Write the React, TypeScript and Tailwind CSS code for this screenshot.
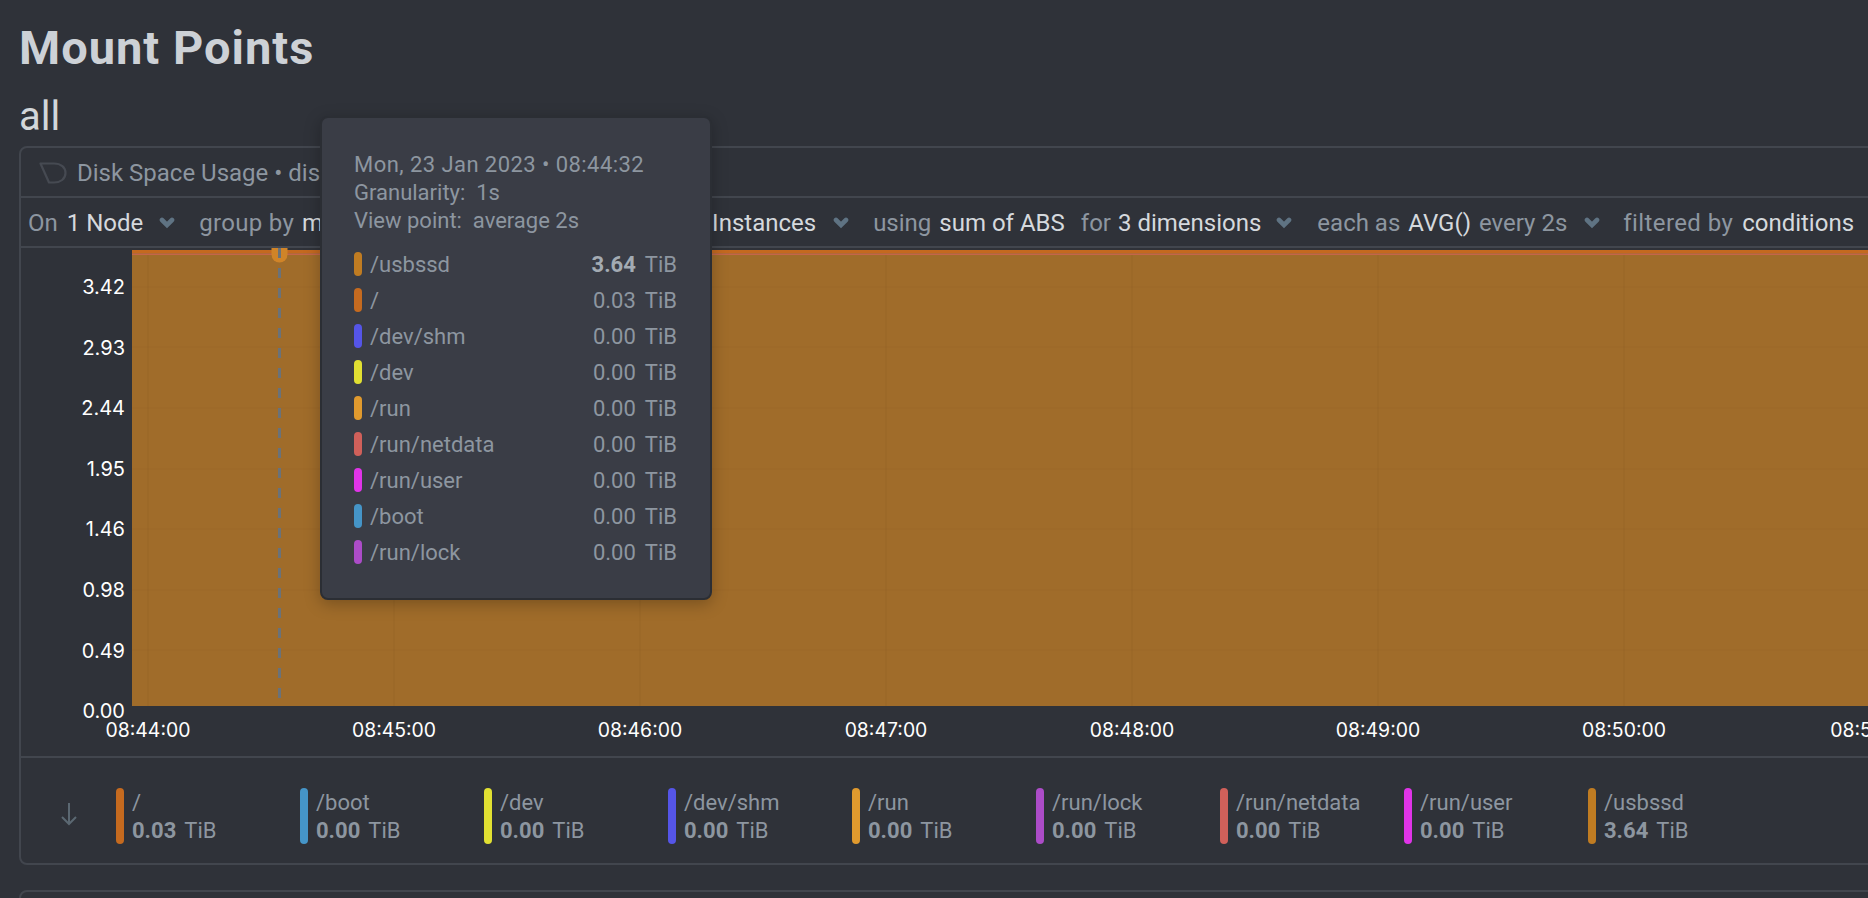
const tooltipRows = [
  { name: "/usbssd", value: "3.64", color: "bg-[#c07c22]", strong: true },
  { name: "/", value: "0.03", color: "bg-[#c56a1f]" },
  { name: "/dev/shm", value: "0.00", color: "bg-[#5555e8]" },
  { name: "/dev", value: "0.00", color: "bg-[#e1e032]" },
  { name: "/run", value: "0.00", color: "bg-[#e09a2e]" },
  { name: "/run/netdata", value: "0.00", color: "bg-[#d0605a]" },
  { name: "/run/user", value: "0.00", color: "bg-[#e034e8]" },
  { name: "/boot", value: "0.00", color: "bg-[#4595c8]" },
  { name: "/run/lock", value: "0.00", color: "bg-[#ac4cc8]" },
];

const legend = [
  { name: "/", value: "0.03", color: "bg-[#c56a1f]" },
  { name: "/boot", value: "0.00", color: "bg-[#4595c8]" },
  { name: "/dev", value: "0.00", color: "bg-[#e1e032]" },
  { name: "/dev/shm", value: "0.00", color: "bg-[#5555e8]" },
  { name: "/run", value: "0.00", color: "bg-[#e09a2e]" },
  { name: "/run/lock", value: "0.00", color: "bg-[#ac4cc8]" },
  { name: "/run/netdata", value: "0.00", color: "bg-[#d0605a]" },
  { name: "/run/user", value: "0.00", color: "bg-[#e034e8]" },
  { name: "/usbssd", value: "3.64", color: "bg-[#c07c22]" },
];

const yLabels = ["3.42", "2.93", "2.44", "1.95", "1.46", "0.98", "0.49", "0.00"];
const xLabels = ["08:44:00", "08:45:00", "08:46:00", "08:47:00", "08:48:00", "08:49:00", "08:50:00", "08:51:00"];

function Chevron() {
  return (
    <svg width="16" height="12" viewBox="0 0 16 12" fill="none" className="shrink-0">
      <path d="M3 3 L8 8 L13 3" stroke="#5f7383" strokeWidth="4.6" strokeLinecap="round" strokeLinejoin="miter" />
    </svg>
  );
}

function Gray({ children }: { children: React.ReactNode }) {
  return <span className="text-[#8d96a0]">{children}</span>;
}

function Light({ children }: { children: React.ReactNode }) {
  return <span className="text-[#d5d9dd]">{children}</span>;
}

export default function App() {
  return (
    <div className="relative h-[898px] w-[1868px] overflow-hidden bg-[#2f3239] font-['Roboto','Noto_Sans',sans-serif]">
      <div className="pl-[19px]">
        <h1 className="h-[95px] pt-[20px] text-[47px] leading-[56px] font-bold tracking-[1px] text-[#cdd1d6]">Mount Points</h1>
        <div className="h-[51px] text-[40px] leading-[44px] text-[#d2d6da]">all</div>

        <div className="w-[1900px] rounded-lg border-2 border-[#42464e]">
          <div className="flex h-[50px] items-center gap-[10px] border-b-2 border-[#42464e] pt-px pl-[18px] text-[24px] text-[#8d96a0]">
            <svg width="28" height="24" viewBox="0 0 28 24" fill="none" stroke="#464a52" strokeWidth="2.2">
              <path d="M1.5 2.5 H15 C22 2.5 26.5 6.5 26.5 12 C26.5 18 21.5 21.5 15 21.5 H10 Z" strokeLinejoin="round" />
            </svg>
            <span>Disk Space Usage • disk.space</span>
          </div>

          <div className="flex h-[50px] items-center border-b-2 border-[#42464e] pt-px pl-[7px] text-[24px] whitespace-nowrap">
            <Gray>On</Gray>
            <span className="ml-[9px]"><Light>1 Node</Light></span>
            <span className="ml-[16px]"><Chevron /></span>
            <span className="ml-[24px] tracking-[0.3px]"><Gray>group by</Gray></span>
            <span className="ml-[8px] w-[410px]"><Light>mount_point • 9</Light></span>
            <Light>Instances</Light>
            <span className="ml-[17px]"><Chevron /></span>
            <span className="ml-[24px]"><Gray>using</Gray></span>
            <span className="ml-[8px]"><Light>sum of ABS</Light></span>
            <span className="ml-[16px]"><Gray>for</Gray></span>
            <span className="ml-[7px]"><Light>3 dimensions</Light></span>
            <span className="ml-[15px]"><Chevron /></span>
            <span className="ml-[25px]"><Gray>each as</Gray></span>
            <span className="ml-[8px]"><Light>AVG()</Light></span>
            <span className="ml-[8px]"><Gray>every 2s</Gray></span>
            <span className="ml-[17px]"><Chevron /></span>
            <span className="ml-[23px] tracking-[0.4px]"><Gray>filtered by</Gray></span>
            <span className="ml-[9px]"><Light>conditions</Light></span>
          </div>

          <div className="flex h-[458px] pt-[2px]">
            <div className="w-[111px] pt-[7px] pr-[7px] text-right font-['Inter',sans-serif] text-[20px] text-white">
              {yLabels.map((l) => (
                <div key={l} className="h-[60.6px] leading-[60.6px]">{l}</div>
              ))}
            </div>
            <div className="relative flex-1 bg-[#a06c2a]">
              <svg width="1768" height="456" className="block overflow-visible">
                <rect x="0" y="0" width="1768" height="3" fill="#c4691f" />
                <rect x="0" y="3.5" width="1768" height="1.5" fill="#c4654a" />
                {[16, 262, 508, 754, 1000, 1246, 1492, 1738].map((x) => (
                  <line key={x} x1={x} x2={x} y1="5" y2="456" stroke="#8f6126" strokeOpacity="0.5" />
                ))}
                {[37, 97, 158, 219, 279, 340, 400].map((y) => (
                  <line key={y} x1="0" x2="1768" y1={y} y2={y} stroke="#8f6126" strokeOpacity="0.25" />
                ))}
                <line x1="147.5" x2="147.5" y1="0" y2="450" stroke="#6b7278" strokeWidth="3" strokeDasharray="10 10" strokeDashoffset="2" />
                <path d="M139.5 -2 H155.5 V4.5 A8 8 0 0 1 139.5 4.5 Z" fill="#d08428" />
                <line x1="147.5" x2="147.5" y1="-2" y2="8" stroke="#6b7278" strokeWidth="3" />
              </svg>
            </div>
          </div>

          <div className="flex h-[52px] border-b-2 border-[#42464e] pt-[12px] pl-[4px] font-['Inter',sans-serif] text-[19.4px] leading-[24px] whitespace-nowrap text-white">
            {xLabels.map((l) => (
              <div key={l} className="w-[246px] shrink-0 text-center">{l}</div>
            ))}
          </div>

          <div className="flex h-[105px] items-start pt-[30px]">
            <div className="flex w-[95px] justify-center pt-[14px]">
              <svg width="18" height="24" viewBox="0 0 18 24" fill="none" stroke="#5b6872" strokeWidth="2">
                <path d="M9 1 V22 M2 15 L9 22 L16 15" />
              </svg>
            </div>
            {legend.map((l) => (
              <div key={l.name} className="flex w-[184px] gap-[8px]">
                <div className={`h-[56px] w-[8px] rounded-full ${l.color}`} />
                <div className="pt-px text-[22px] leading-[28px] text-[#8d96a0]">
                  <div>{l.name}</div>
                  <div><span className="mr-[8px] font-bold">{l.value}</span>TiB</div>
                </div>
              </div>
            ))}
          </div>
        </div>

        <div className="mt-[25px] h-[40px] w-[1900px] rounded-lg border-2 border-[#42464e]" />
      </div>

      <div className="absolute top-[116px] left-[320px] h-[484px] w-[392px] rounded-lg border-2 border-[#2b2e34] bg-[#3a3d46] pt-[33px] pr-[33px] pl-[32px] text-[22px] text-[#8d96a0] shadow-[0_4px_16px_rgba(0,0,0,0.25)]">
        <div className="leading-[28px]">
          <div className="tracking-[0.44px]">Mon, 23 Jan 2023 • 08:44:32</div>
          <div>Granularity:&nbsp; 1s</div>
          <div>View point:&nbsp; average 2s</div>
        </div>
        <div className="mt-[11px]">
          {tooltipRows.map((r) => (
            <div key={r.name} className="flex h-[36px] items-center">
              <div className={`h-[24px] w-[8px] rounded-full ${r.color}`} />
              <div className="ml-[8px] flex-1">{r.name}</div>
              <div className={r.strong ? "font-bold text-[#a3abb3]" : ""}>{r.value}</div>
              <div className="ml-[9px]">TiB</div>
            </div>
          ))}
        </div>
      </div>
    </div>
  );
}
